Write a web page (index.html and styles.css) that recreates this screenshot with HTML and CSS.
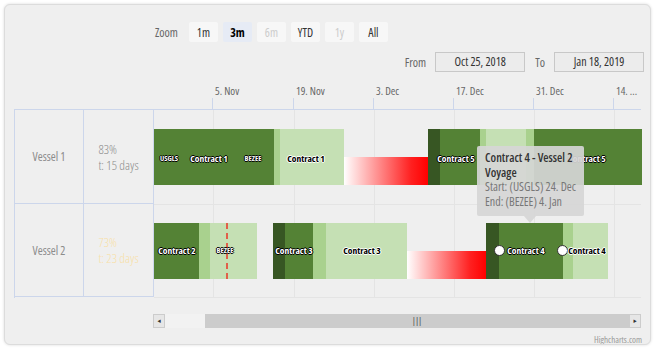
FILE: index.html
```html
<!DOCTYPE html>
<html lang="en">
<head>
    <meta charset="UTF-8">
    <title>Vessel Schedule</title>
    <link rel="stylesheet" href="styles.css">
</head>
<body>
    <div class="chart">
        <div class="ranges">
            <span class="ranges-label">Zoom</span>
            <button class="range">1m</button>
            <button class="range selected">3m</button>
            <button class="range disabled">6m</button>
            <button class="range">YTD</button>
            <button class="range disabled">1y</button>
            <button class="range">All</button>
        </div>

        <div class="inputs">
            <span class="input-label">From</span>
            <span class="date-box">Oct 25, 2018</span>
            <span class="input-label">To</span>
            <span class="date-box">Jan 18, 2019</span>
        </div>

        <div class="axis">
            <span class="tick" style="left:59px"></span><span class="axis-label" style="left:62px">5. Nov</span>
            <span class="tick" style="left:140px"></span><span class="axis-label" style="left:143px">19. Nov</span>
            <span class="tick" style="left:220px"></span><span class="axis-label" style="left:223px">3. Dec</span>
            <span class="tick" style="left:300px"></span><span class="axis-label" style="left:303px">17. Dec</span>
            <span class="tick" style="left:380px"></span><span class="axis-label" style="left:383px">31. Dec</span>
            <span class="tick" style="left:460px"></span><span class="axis-label" style="left:463px">14. ...</span>
        </div>

        <div class="grid">
            <div class="cats">
                <div class="cell name">Vessel 1</div>
                <div class="cell stat"><div>83%<br>t: 15 days</div></div>
                <div class="cell name">Vessel 2</div>
                <div class="cell stat warn"><div>73%<br>t: 23 days</div></div>
            </div>

            <div class="plot">
                <span class="vline" style="left:59px"></span>
                <span class="vline" style="left:140px"></span>
                <span class="vline" style="left:220px"></span>
                <span class="vline" style="left:300px"></span>
                <span class="vline" style="left:380px"></span>
                <span class="vline" style="left:460px"></span>
                <span class="hline" style="top:94px"></span>
                <span class="hline" style="top:187px"></span>

                <!-- Vessel 1 -->
                <div class="bar dark" style="left:0;width:120px;top:19px"></div>
                <div class="bar mid" style="left:120px;width:6px;top:19px"></div>
                <div class="bar light" style="left:126px;width:64px;top:19px"></div>
                <div class="gap" style="left:190px;width:84px;top:47px"></div>
                <div class="bar vdark" style="left:274px;width:12px;top:19px"></div>
                <div class="bar dark" style="left:286px;width:40px;top:19px"></div>
                <div class="bar mid" style="left:326px;width:6px;top:19px"></div>
                <div class="bar light" style="left:332px;width:40px;top:19px"></div>
                <div class="bar mid" style="left:372px;width:8px;top:19px"></div>
                <div class="bar dark" style="left:380px;width:108px;top:19px"></div>

                <span class="lbl on-dark small" style="left:15px;top:48px">USGLS</span>
                <span class="lbl on-dark" style="left:55px;top:48px">Contract 1</span>
                <span class="lbl on-dark small" style="left:99px;top:48px">BEZEE</span>
                <span class="lbl on-light" style="left:152px;top:48px">Contract 1</span>
                <span class="lbl on-dark" style="left:302px;top:48px">Contract 5</span>
                <span class="lbl on-dark" style="left:433px;top:48px">Contract 5</span>

                <!-- Vessel 2 -->
                <div class="bar dark" style="left:0;width:45px;top:113px"></div>
                <div class="bar mid" style="left:45px;width:11px;top:113px"></div>
                <div class="bar light" style="left:56px;width:47px;top:113px"></div>
                <span class="port-line" style="left:72px;top:113px"></span>
                <div class="bar vdark" style="left:119px;width:12px;top:113px"></div>
                <div class="bar dark" style="left:131px;width:28px;top:113px"></div>
                <div class="bar mid" style="left:159px;width:13px;top:113px"></div>
                <div class="bar light" style="left:172px;width:81px;top:113px"></div>
                <div class="gap" style="left:253px;width:79px;top:141px"></div>
                <div class="bar vdark" style="left:332px;width:13px;top:113px"></div>
                <div class="bar dark" style="left:345px;width:64px;top:113px"></div>
                <div class="bar mid" style="left:409px;width:10px;top:113px"></div>
                <div class="bar light" style="left:419px;width:35px;top:113px"></div>
                <span class="dot" style="left:345px;top:140px"></span>
                <span class="dot" style="left:408px;top:140px"></span>

                <span class="lbl on-dark" style="left:23px;top:140px">Contract 2</span>
                <span class="lbl on-dark small" style="left:71px;top:140px">BEZEE</span>
                <span class="lbl on-dark" style="left:140px;top:140px">Contract 3</span>
                <span class="lbl on-light" style="left:208px;top:140px">Contract 3</span>
                <span class="lbl on-dark" style="left:372px;top:140px">Contract 4</span>
                <span class="lbl on-light" style="left:433px;top:140px">Contract 4</span>

                <div class="tooltip">
                    <div class="tt-title">Contract 4 - Vessel 2</div>
                    <div class="tt-title">Voyage</div>
                    <div class="tt-line">Start: (USGLS) 24. Dec</div>
                    <div class="tt-line">End: (BEZEE) 4. Jan</div>
                </div>
            </div>
        </div>

        <div class="scrollbar">
            <span class="sb-btn">&#9666;</span>
            <div class="sb-track">
                <div class="sb-thumb">|||</div>
            </div>
            <span class="sb-btn">&#9656;</span>
        </div>

        <div class="credits">Highcharts.com</div>
    </div>
</body>
</html>
```

FILE: styles.css
```css
body {
    margin: 0;
    background: #fff;
    font-family: "Open Sans", "DejaVu Sans Condensed", sans-serif;
    font-stretch: 75%;
}

.chart {
    margin: 4px;
    width: 647px;
    height: 341px;
    box-sizing: border-box;
    background: #efefef;
    border: 1px solid #dcdcdc;
    border-radius: 6px;
    box-shadow: 0 0 3px rgba(0, 0, 0, 0.15);
    overflow: hidden;
}

.ranges {
    display: flex;
    align-items: center;
    gap: 5px;
    margin-top: 17px;
    padding-left: 150px;
    height: 20px;
}

.ranges-label {
    font-size: 12px;
    color: #666;
    margin-right: 6px;
}

.range {
    width: 29px;
    height: 20px;
    padding: 0;
    border: none;
    border-radius: 2px;
    background: #f7f7f7;
    color: #333;
    font-family: inherit;
    font-stretch: inherit;
    font-size: 12px;
}

.range.selected {
    background: #e6ebf5;
    font-weight: bold;
    color: #000;
}

.range.disabled {
    color: #ccc;
}

.inputs {
    display: flex;
    justify-content: flex-end;
    align-items: center;
    gap: 10px;
    margin-top: 10px;
    padding-right: 6px;
    height: 20px;
}

.input-label {
    font-size: 12px;
    color: #666;
}

.date-box {
    width: 88px;
    height: 18px;
    line-height: 18px;
    border: 1px solid #c8c8c8;
    background: #ececec;
    text-align: center;
    font-size: 12px;
    color: #333;
}

.input-label + .date-box {
    margin-left: -1px;
}

.axis {
    position: relative;
    height: 37px;
    margin-left: 148px;
    width: 488px;
}

.tick {
    position: absolute;
    bottom: 0;
    width: 1px;
    height: 11px;
    background: #ccd6eb;
}

.axis-label {
    position: absolute;
    top: 11px;
    font-size: 11px;
    color: #666;
    white-space: nowrap;
}

.grid {
    display: flex;
    margin-left: 9px;
    width: 627px;
    border-top: 1px solid #ccd6eb;
}

.cats {
    display: grid;
    grid-template-columns: 69px 70px;
    grid-template-rows: 94px 93px;
    border-left: 1px solid #ccd6eb;
}

.cell {
    display: flex;
    align-items: center;
    justify-content: center;
    border-right: 1px solid #ccd6eb;
    border-bottom: 1px solid #ccd6eb;
    color: #8c8c8c;
}

.name {
    font-size: 12px;
}

.stat {
    font-size: 13px;
    line-height: 16px;
    font-weight: 300;
}

.stat.warn {
    color: #f8dfa8;
}

.plot {
    position: relative;
    width: 488px;
    height: 188px;
}

.vline {
    position: absolute;
    top: 0;
    bottom: 0;
    width: 1px;
    background: #e4e4e4;
}

.hline {
    position: absolute;
    left: 0;
    right: 0;
    height: 1px;
    background: #e4e4e4;
}

.bar {
    position: absolute;
    height: 56px;
}

.dark { background: #548235; }
.vdark { background: #375623; }
.mid { background: #a9d18e; }
.light { background: #c5e0b4; }

.gap {
    position: absolute;
    height: 28px;
    background: linear-gradient(to right, #fff, #ff2020 80%, #f00);
}

.port-line {
    position: absolute;
    width: 0;
    height: 56px;
    border-left: 2px dashed #e0604a;
}

.dot {
    position: absolute;
    width: 9px;
    height: 9px;
    margin: -5px 0 0 -5px;
    border-radius: 50%;
    background: #fff;
    border: 1px solid #333;
}

.lbl {
    position: absolute;
    transform: translate(-50%, -50%);
    font-size: 9.5px;
    font-weight: bold;
    white-space: nowrap;
}

.lbl.small {
    font-size: 7.5px;
}

.on-dark {
    color: #fff;
    text-shadow: 1px 0 0 #000, -1px 0 0 #000, 0 1px 0 #000, 0 -1px 0 #000;
}

.on-light {
    color: #000;
    text-shadow: 1px 0 0 #fff, -1px 0 0 #fff, 0 1px 0 #fff, 0 -1px 0 #fff;
}

.tooltip {
    position: absolute;
    left: 323px;
    top: 36px;
    width: 107px;
    height: 70px;
    box-sizing: border-box;
    padding: 5px 0 0 8px;
    background: rgba(214, 214, 214, 0.92);
    border-radius: 2px;
    font-size: 12px;
    line-height: 14.5px;
    white-space: nowrap;
}

.tooltip::after {
    content: "";
    position: absolute;
    left: 47px;
    bottom: -7px;
    border-left: 6px solid transparent;
    border-right: 6px solid transparent;
    border-top: 7px solid rgba(214, 214, 214, 0.92);
}

.tt-title {
    color: #333;
    font-weight: 600;
}

.tt-line {
    color: #777;
}

.scrollbar {
    display: flex;
    margin-top: 16px;
    margin-left: 148px;
    width: 488px;
    height: 14px;
}

.sb-btn {
    width: 10px;
    border: 1px solid #ccc;
    background: #e6e6e6;
    font-size: 7px;
    line-height: 12px;
    text-align: center;
    color: #333;
}

.sb-track {
    flex: 1;
    background: #f2f2f2;
    padding-left: 40px;
}

.sb-thumb {
    height: 14px;
    background: #ccc;
    font-size: 8px;
    line-height: 14px;
    text-align: center;
    color: #333;
}

.credits {
    margin-top: 5px;
    padding-right: 8px;
    text-align: right;
    font-size: 9px;
    color: #999;
}
```
